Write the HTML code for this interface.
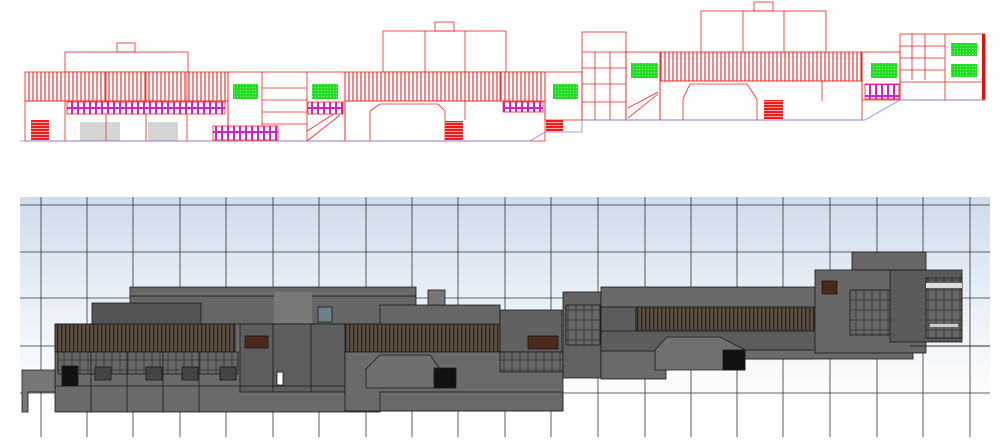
<!DOCTYPE html>
<html><head><meta charset="utf-8"><style>
html,body{margin:0;padding:0;background:#fff;width:1000px;height:448px;overflow:hidden}
</style></head><body>
<svg width="1000" height="448" viewBox="0 0 1000 448" xmlns="http://www.w3.org/2000/svg">
<defs>
<pattern id="rail" width="4" height="10" patternUnits="userSpaceOnUse"><rect width="4" height="10" fill="#fff"/><line x1="1" y1="0" x2="1" y2="10" stroke="#e01010" stroke-width="1"/></pattern>
<pattern id="pw" width="6" height="12" patternUnits="userSpaceOnUse"><rect width="6" height="12" fill="#fff"/><rect x="0.5" y="0.5" width="5" height="11" fill="none" stroke="#d020d0" stroke-width="1"/></pattern>
<pattern id="grn" width="3" height="3" patternUnits="userSpaceOnUse"><rect width="3" height="3" fill="#22dd22"/><rect width="1" height="1" fill="#99ee99"/></pattern>
<pattern id="stair" width="4" height="3" patternUnits="userSpaceOnUse"><rect width="4" height="3" fill="#ee1b1b"/><rect y="2" width="4" height="0.6" fill="#fff"/></pattern>
<pattern id="brail" width="4" height="20" patternUnits="userSpaceOnUse"><rect width="4" height="20" fill="#5b4e42"/><rect x="1" width="1.3" height="20" fill="#2a2522"/></pattern>
<pattern id="gwin" width="8" height="10" patternUnits="userSpaceOnUse"><rect width="8" height="10" fill="#666"/><rect x="0" y="0" width="8" height="10" fill="none" stroke="#333" stroke-width="0.8"/></pattern>
<linearGradient id="sky" x1="0" y1="0" x2="0" y2="1"><stop offset="0" stop-color="#cfdcec"/><stop offset="0.5" stop-color="#eaf0f7"/><stop offset="1" stop-color="#ffffff"/></linearGradient>
</defs>

<!-- TOP DRAWING -->
<g fill="none" stroke="#ee2222" stroke-width="0.8">
<!-- section 1 -->
<rect x="65" y="52" width="123" height="20"/>
<rect x="117" y="43" width="18" height="9"/>
<rect x="25" y="72" width="203" height="29" fill="url(#rail)"/>
<line x1="65" y1="72" x2="65" y2="141"/><line x1="106" y1="72" x2="106" y2="141"/><line x1="146" y1="72" x2="146" y2="141"/><line x1="187" y1="72" x2="187" y2="141"/>
<rect x="67" y="102" width="158" height="12" fill="url(#pw)"/>
<rect x="25" y="101" width="203" height="40"/>
<rect x="228" y="72" width="117" height="69"/>
<line x1="262" y1="72" x2="262" y2="141"/><line x1="307" y1="72" x2="307" y2="141"/>
<line x1="262" y1="88" x2="307" y2="88"/><line x1="262" y1="100" x2="307" y2="100"/><line x1="262" y1="112" x2="307" y2="112"/><line x1="262" y1="124" x2="307" y2="124"/>
<line x1="307" y1="141" x2="340" y2="115"/><line x1="307" y1="131" x2="340" y2="110"/>
<rect x="308" y="102" width="35" height="12" fill="url(#pw)"/>
<rect x="213" y="126" width="65" height="14" fill="url(#pw)"/>
<!-- section 2 -->
<rect x="383" y="31" width="123" height="41"/>
<rect x="435" y="22" width="19" height="9"/>
<line x1="425" y1="31" x2="425" y2="72"/><line x1="465" y1="31" x2="465" y2="72"/>
<rect x="345" y="72" width="200" height="29" fill="url(#rail)"/>
<rect x="345" y="101" width="200" height="40"/>
<path d="M370 141V111L380 104H438L445 111V141"/>
<line x1="465" y1="101" x2="465" y2="120"/>
<rect x="503" y="102" width="40" height="10" fill="url(#pw)"/>
<!-- section 3 -->
<rect x="500" y="72" width="45" height="29" fill="url(#rail)"/>
<rect x="545" y="72" width="37" height="48"/>
<rect x="582" y="32" width="44" height="88"/>
<line x1="595" y1="52" x2="595" y2="120"/><line x1="610" y1="52" x2="610" y2="120"/>
<line x1="582" y1="52" x2="626" y2="52"/><line x1="582" y1="68" x2="626" y2="68"/><line x1="582" y1="84" x2="626" y2="84"/><line x1="582" y1="102" x2="626" y2="102"/>
<rect x="626" y="52" width="34" height="68"/>
<line x1="628" y1="118" x2="658" y2="94"/><line x1="628" y1="108" x2="658" y2="92"/>
<rect x="701" y="11" width="125" height="41"/>
<rect x="754" y="2" width="19" height="9"/>
<line x1="743" y1="11" x2="743" y2="52"/><line x1="784" y1="11" x2="784" y2="52"/>
<rect x="660" y="52" width="202" height="29" fill="url(#rail)"/>
<rect x="660" y="81" width="202" height="39"/>
<path d="M683 120V99L690 84H747L757 99V120"/>
<line x1="822" y1="81" x2="822" y2="101"/>
<rect x="862" y="52" width="38" height="48"/>
<rect x="865" y="84" width="34" height="15" fill="url(#pw)"/>
<rect x="900" y="34" width="85" height="66"/>
<line x1="945" y1="34" x2="945" y2="100"/><line x1="912" y1="34" x2="912" y2="80"/><line x1="925" y1="34" x2="925" y2="80"/>
<line x1="900" y1="46" x2="945" y2="46"/><line x1="900" y1="58" x2="945" y2="58"/><line x1="900" y1="70" x2="945" y2="70"/><line x1="900" y1="82" x2="985" y2="82"/>
</g>
<g>
<rect x="233" y="84" width="25" height="15" fill="url(#grn)"/>
<rect x="312" y="84" width="26" height="15" fill="url(#grn)"/>
<rect x="631" y="63" width="27" height="15" fill="url(#grn)"/>
<rect x="553" y="84" width="25" height="15" fill="url(#grn)"/>
<rect x="871" y="63" width="26" height="15" fill="url(#grn)"/>
<rect x="951" y="43" width="26" height="13" fill="url(#grn)"/>
<rect x="951" y="64" width="26" height="13" fill="url(#grn)"/>
<rect x="31" y="120" width="18" height="21" fill="url(#stair)"/>
<rect x="445" y="121" width="18" height="20" fill="url(#stair)"/>
<rect x="546" y="120" width="17" height="12" fill="url(#stair)"/>
<rect x="764" y="100" width="19" height="20" fill="url(#stair)"/>
<rect x="982" y="34" width="3" height="66" fill="#e01010"/>
<rect x="80" y="122" width="40" height="19" fill="#888" opacity="0.35"/>
<rect x="148" y="122" width="30" height="19" fill="#888" opacity="0.35"/>
</g>
<g fill="none" stroke="#8080ee" stroke-width="0.8">
<path d="M20 141H530L545 132H582V120H865L900 100H985"/>
</g>

<!-- BOTTOM -->
<rect x="20" y="197" width="970" height="210" fill="url(#sky)"/>
<g stroke="#333" stroke-width="0.8">
<line x1="20" y1="205" x2="990" y2="205"/><line x1="20" y1="252" x2="990" y2="252"/><line x1="20" y1="298" x2="990" y2="298"/><line x1="20" y1="346" x2="990" y2="346"/><line x1="20" y1="393" x2="990" y2="393"/>
<line x1="41" y1="197" x2="41" y2="437"/><line x1="87" y1="197" x2="87" y2="437"/><line x1="133" y1="197" x2="133" y2="437"/><line x1="180" y1="197" x2="180" y2="437"/><line x1="226" y1="197" x2="226" y2="437"/><line x1="273" y1="197" x2="273" y2="437"/><line x1="319" y1="197" x2="319" y2="437"/><line x1="366" y1="197" x2="366" y2="437"/><line x1="412" y1="197" x2="412" y2="437"/><line x1="458" y1="197" x2="458" y2="437"/><line x1="505" y1="197" x2="505" y2="437"/><line x1="551" y1="197" x2="551" y2="437"/><line x1="598" y1="197" x2="598" y2="437"/><line x1="645" y1="197" x2="645" y2="437"/><line x1="691" y1="197" x2="691" y2="437"/><line x1="737" y1="197" x2="737" y2="437"/><line x1="783" y1="197" x2="783" y2="437"/><line x1="830" y1="197" x2="830" y2="437"/><line x1="877" y1="197" x2="877" y2="437"/><line x1="923" y1="197" x2="923" y2="437"/><line x1="970" y1="197" x2="970" y2="437"/>
</g>
<g stroke="#1a1a1a" stroke-width="0.8">
<!-- back masses -->
<path d="M130 296V287H416V296" fill="#6a6a6a"/>
<rect x="130" y="296" width="286" height="30" fill="#666"/>
<rect x="274" y="292" width="38" height="34" fill="#787878" stroke="none"/>
<rect x="318" y="307" width="14" height="15" fill="#6e7f8c"/>
<rect x="92" y="303" width="109" height="22" fill="#545454"/>
<rect x="380" y="305" width="120" height="20" fill="#666"/>
<rect x="428" y="290" width="17" height="15" fill="#777"/>
<!-- left main -->
<rect x="55" y="324" width="325" height="88" fill="#6a6a6a"/>
<rect x="55" y="324" width="180" height="28" fill="url(#brail)"/>
<rect x="345" y="324" width="160" height="28" fill="url(#brail)"/>
<rect x="58" y="352" width="180" height="22" fill="url(#gwin)"/>
<rect x="240" y="324" width="105" height="68" fill="#5e5e5e"/>
<rect x="245" y="336" width="23" height="12" fill="#4a2a1c"/>
<line x1="273" y1="324" x2="273" y2="392"/><line x1="311" y1="324" x2="311" y2="392"/>
<rect x="277" y="372" width="6" height="13" fill="#fff"/>
<line x1="55" y1="386" x2="380" y2="386"/>
<line x1="91" y1="352" x2="91" y2="412"/><line x1="127" y1="352" x2="127" y2="412"/><line x1="163" y1="352" x2="163" y2="412"/><line x1="199" y1="352" x2="199" y2="412"/>
<rect x="95" y="367" width="16" height="13" fill="#444"/><rect x="146" y="367" width="16" height="13" fill="#444"/><rect x="182" y="367" width="16" height="13" fill="#444"/><rect x="220" y="367" width="16" height="13" fill="#444"/>
<rect x="62" y="366" width="16" height="20" fill="#111"/>
<!-- left ramp -->
<path d="M22 370H55V392H28V412H22Z" fill="#777"/>
<!-- middle lower -->
<rect x="345" y="352" width="218" height="59" fill="#6a6a6a"/>
<rect x="380" y="392" width="183" height="19" fill="#6a6a6a"/>
<path d="M366 388V369L380 355H430L440 369V388Z" fill="#6e6e6e"/>
<rect x="434" y="368" width="22" height="20" fill="#111"/>
<!-- middle-right -->
<rect x="500" y="310" width="62" height="42" fill="#616161"/>
<rect x="528" y="336" width="30" height="13" fill="#4a2a1c"/>
<rect x="500" y="352" width="63" height="20" fill="url(#gwin)"/>
<rect x="563" y="292" width="38" height="86" fill="#626262"/>
<rect x="566" y="305" width="34" height="40" fill="url(#gwin)"/>
<rect x="601" y="287" width="215" height="42" fill="#696969"/>
<rect x="601" y="307" width="35" height="35" fill="#5c5c5c"/>
<rect x="636" y="307" width="180" height="24" fill="url(#brail)"/>
<rect x="601" y="331" width="215" height="28" fill="#5d5d5d"/>
<rect x="601" y="351" width="65" height="28" fill="#6a6a6a"/>
<path d="M655 370V350L667 337H720L745 350V370Z" fill="#707070"/>
<rect x="723" y="350" width="22" height="20" fill="#111"/>
<rect x="745" y="350" width="168" height="9" fill="#6a6a6a"/>
<!-- right block -->
<rect x="852" y="252" width="74" height="18" fill="#666"/>
<rect x="815" y="270" width="111" height="83" fill="#676767"/>
<rect x="822" y="281" width="15" height="13" fill="#4a2a1c"/>
<rect x="850" y="290" width="40" height="45" fill="url(#gwin)"/>
<rect x="890" y="270" width="72" height="72" fill="#5a5a5a"/>
<rect x="926" y="278" width="36" height="60" fill="url(#gwin)"/>
<rect x="926" y="283" width="36" height="5" fill="#ddd" stroke="none"/>
<rect x="930" y="324" width="28" height="3" fill="#ccc" stroke="none"/>
<line x1="910" y1="346" x2="990" y2="346"/>
</g>
</svg>
</body></html>
